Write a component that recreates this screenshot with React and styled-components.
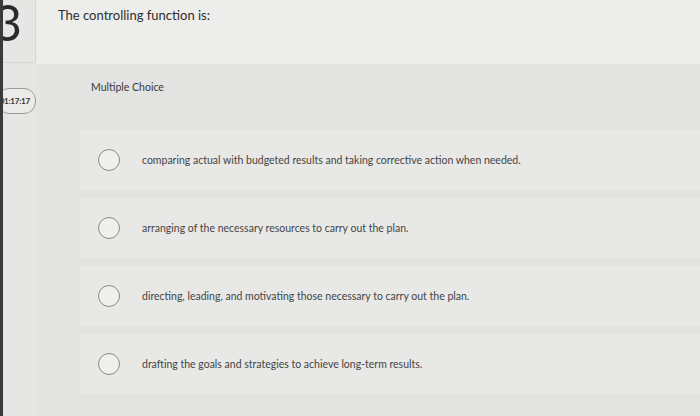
import React from 'react';
import styled, { createGlobalStyle } from 'styled-components';

const GlobalStyle = createGlobalStyle`
  html, body {
    margin: 0;
    padding: 0;
    background: #e4e4e2;
  }
  body {
    font-family: Lato, "Open Sans", "Liberation Sans", sans-serif;
  }
`;

const Page = styled.div`
  display: flex;
  width: 700px;
  height: 416px;
  overflow: hidden;
  background: #e4e4e2;
  border-left: 3px solid #3a3a3a;
  box-sizing: border-box;
`;

const Sidebar = styled.aside`
  width: 33px;
  flex-shrink: 0;
  display: flex;
  flex-direction: column;
  background: #e6e6e4;
`;

const NumberBox = styled.div`
  height: 62px;
  border-right: 1px solid #d6d6d4;
  border-bottom: 1px solid #d6d6d4;
  overflow: hidden;
  font-size: 50px;
  line-height: 44px;
  color: #2a2a2a;
  text-indent: -10px;
  font-weight: 400;
`;

const Timer = styled.div`
  margin: 25px 0 0 -6px;
  height: 24px;
  border: 1px solid #9a9a98;
  border-radius: 12px;
  display: flex;
  align-items: center;
  justify-content: flex-end;
  padding-right: 5px;
  font-size: 8px;
  font-weight: 700;
  letter-spacing: -0.2px;
  color: #333;
  background: #ebebe9;
`;

const Main = styled.main`
  flex: 1;
  display: flex;
  flex-direction: column;
`;

const Question = styled.div`
  height: 64px;
  padding: 7px 0 0 22px;
  box-sizing: border-box;
  background: #ededeb;
  font-size: 13px;
  color: #2e2e2e;
`;

const ChoiceSection = styled.section`
  flex: 1;
  margin-left: 22px;
  background: #e3e3e1;
  display: flex;
  flex-direction: column;
`;

const Label = styled.div`
  padding: 17px 0 0 33px;
  height: 66px;
  box-sizing: border-box;
  font-size: 10.5px;
  color: #3a3a3a;
`;

const Options = styled.div`
  margin-left: 22px;
  display: flex;
  flex-direction: column;
  gap: 8px;
`;

const Option = styled.label`
  height: 60px;
  display: flex;
  align-items: center;
  gap: 22px;
  padding-left: 18px;
  background: #e8e8e6;
  font-size: 10.5px;
  color: #454545;
`;

const Radio = styled.span`
  width: 20px;
  height: 20px;
  border-radius: 50%;
  border: 1.5px solid #8a8a88;
  background: #efefed;
  flex-shrink: 0;
`;

const choices = [
  'comparing actual with budgeted results and taking corrective action when needed.',
  'arranging of the necessary resources to carry out the plan.',
  'directing, leading, and motivating those necessary to carry out the plan.',
  'drafting the goals and strategies to achieve long-term results.',
];

export default function App() {
  return (
    <>
      <GlobalStyle />
      <Page>
        <Sidebar>
          <NumberBox>3</NumberBox>
          <Timer>01:17:17</Timer>
        </Sidebar>
        <Main>
          <Question>The controlling function is:</Question>
          <ChoiceSection>
            <Label>Multiple Choice</Label>
            <Options>
              {choices.map((c) => (
                <Option key={c}>
                  <Radio />
                  {c}
                </Option>
              ))}
            </Options>
          </ChoiceSection>
        </Main>
      </Page>
    </>
  );
}
